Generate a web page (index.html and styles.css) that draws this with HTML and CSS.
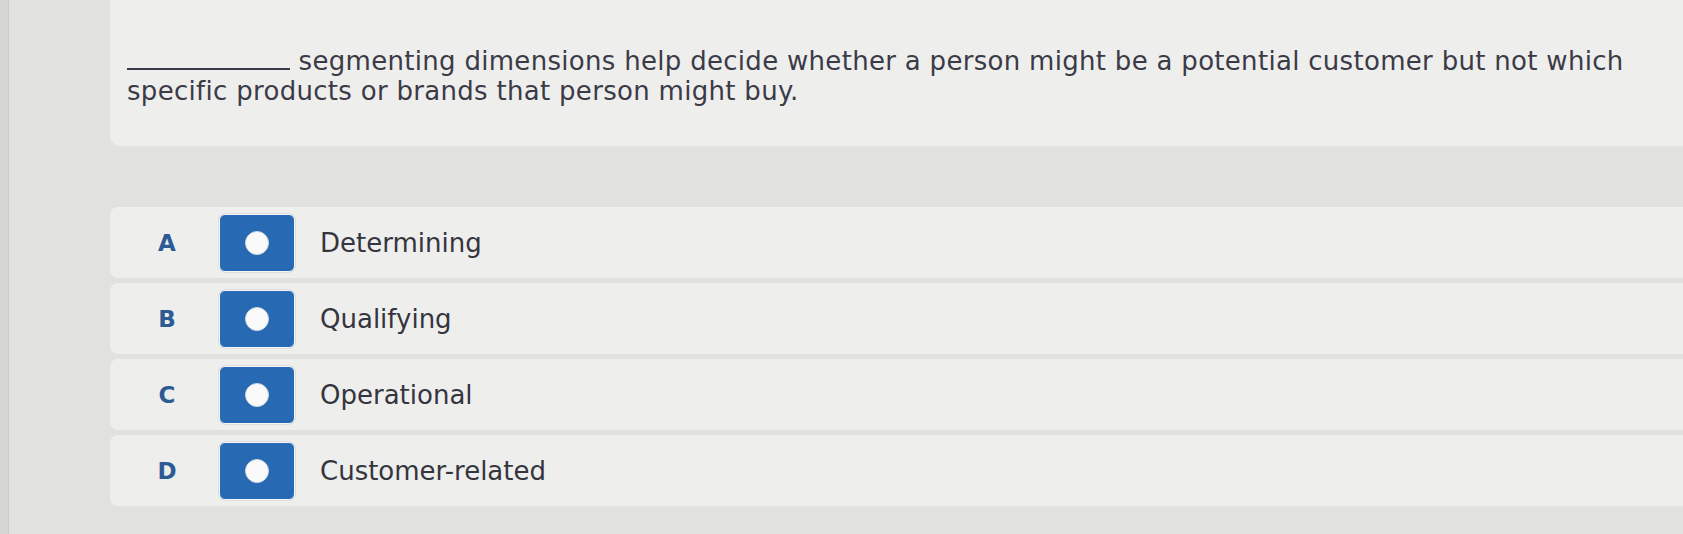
FILE: index.html
```html
<!DOCTYPE html>
<html lang="en">
<head>
<meta charset="utf-8">
<title>Question</title>
<link rel="stylesheet" href="styles.css">
</head>
<body>
<div class="edge"></div>
<main class="page">
  <section class="question">
    <p class="stem"><span class="blank"></span> segmenting dimensions help decide whether a person might be a potential customer but not which specific products or brands that person might buy.</p>
  </section>
  <ul class="options">
    <li class="option"><span class="letter">A</span><span class="radio"><span class="dot"></span></span><span class="label">Determining</span></li>
    <li class="option"><span class="letter">B</span><span class="radio"><span class="dot"></span></span><span class="label">Qualifying</span></li>
    <li class="option"><span class="letter">C</span><span class="radio"><span class="dot"></span></span><span class="label">Operational</span></li>
    <li class="option"><span class="letter">D</span><span class="radio"><span class="dot"></span></span><span class="label">Customer-related</span></li>
  </ul>
</main>
</body>
</html>
```
FILE: styles.css
```css
html, body {
  margin: 0;
  padding: 0;
  height: 100%;
  overflow: hidden;
}
body {
  background: #e1e1e0;
  font-family: "DejaVu Sans", Verdana, sans-serif;
  display: flex;
}
.edge {
  width: 8px;
  flex: none;
  background: #d6d6d5;
  border-right: 1px solid #c9c9c8;
}
.page {
  flex: 1;
  padding-left: 101px;
  margin-right: -30px;
}
.question {
  background: #eeeeed;
  border-radius: 0 0 10px 10px;
  padding: 46px 17px 40px;
}
.stem {
  margin: 0;
  font-size: 26px;
  line-height: 30px;
  letter-spacing: 0.3px;
  color: #3b3b47;
  max-width: 1540px;
}
.blank {
  display: inline-block;
  width: 163px;
  border-bottom: 2px solid #3b3b47;
  vertical-align: baseline;
}
.options {
  list-style: none;
  margin: 61px 0 0;
  padding: 0;
  display: flex;
  flex-direction: column;
  gap: 5px;
}
.option {
  height: 71px;
  background: #eeeeed;
  border-radius: 8px;
  display: flex;
  align-items: center;
}
.letter {
  box-sizing: border-box;
  width: 109px;
  padding-left: 5px;
  text-align: center;
  font-weight: bold;
  font-size: 23px;
  color: #2c5a95;
}
.radio {
  width: 76px;
  height: 58px;
  box-sizing: border-box;
  background: #2769b3;
  border: 1.5px solid #f4f6f8;
  border-radius: 6px;
  display: flex;
  align-items: center;
  justify-content: center;
  margin-right: 25px;
  box-shadow: 0 0 0 0.5px #c8ccd2;
}
.dot {
  width: 24px;
  height: 24px;
  box-sizing: border-box;
  border-radius: 50%;
  background: #fafafa;
  border: 1.5px solid #d0d6de;
}
.label {
  font-size: 26px;
  color: #35353d;
}
```
